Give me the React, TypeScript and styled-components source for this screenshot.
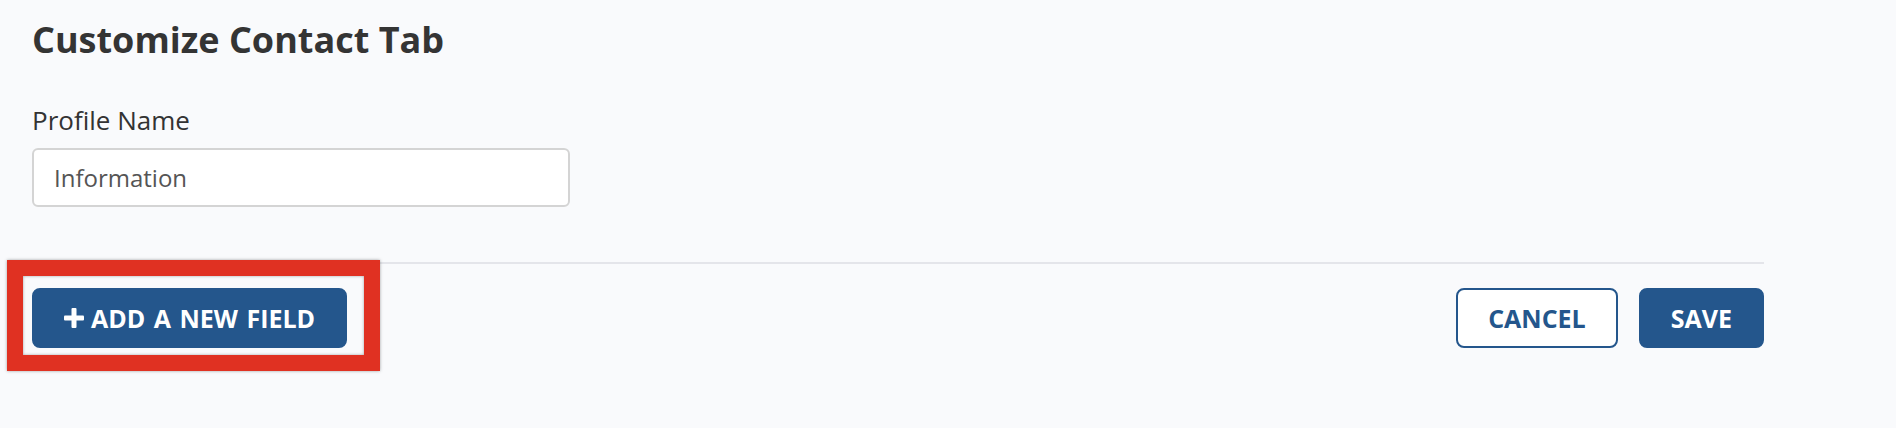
import React from "react";
import styled, { createGlobalStyle } from "styled-components";

const GlobalStyle = createGlobalStyle`
  html, body {
    margin: 0;
    padding: 0;
    background: #f9fafc;
  }
  body {
    font-family: "Open Sans", "Noto Sans", Arial, sans-serif;
    color: #333;
  }
`;

const PlusIcon = () => (
  <svg width="20" height="20" viewBox="0 0 20 20" aria-hidden="true">
    <rect x="7.5" y="0" width="5" height="20" rx="1" fill="currentColor" />
    <rect x="0" y="7.5" width="20" height="5" rx="1" fill="currentColor" />
  </svg>
);

const App = () => {
  return (
    <Page>
      <GlobalStyle />
      <Title>Customize Contact Tab</Title>
      <Field>
        <Label htmlFor="profile-name">Profile Name</Label>
        <Input id="profile-name" defaultValue="Information" />
      </Field>
      <Divider />
      <Footer>
        <Highlighted>
          <Button $variant="solid">
            <PlusIcon />
            ADD A NEW FIELD
          </Button>
          <Marker />
        </Highlighted>
        <Actions>
          <Button $variant="outline">CANCEL</Button>
          <Button $variant="solid">SAVE</Button>
        </Actions>
      </Footer>
    </Page>
  );
};

export default App;

const Page = styled.div`
  width: 1732px;
  padding: 16px 0 0 32px;
  height: 412px;
`;

const Title = styled.h1`
  margin: 0;
  font-size: 36px;
  line-height: 48px;
  font-weight: 700;
  color: #343434;
`;

const Field = styled.div`
  display: flex;
  flex-direction: column;
  margin-top: 38px;
`;

const Label = styled.label`
  font-size: 26px;
  line-height: 36px;
  color: #333;
`;

const Input = styled.input`
  box-sizing: border-box;
  margin-top: 10px;
  width: 538px;
  height: 59px;
  padding: 0 20px;
  border: 2px solid #d4d4d4;
  border-radius: 6px;
  background: #fff;
  font-family: inherit;
  font-size: 24px;
  color: #555;
  outline: none;
`;

const Divider = styled.hr`
  margin: 55px 0 0;
  border: 0;
  height: 2px;
  background: #e4e5ea;
`;

const Footer = styled.div`
  display: flex;
  justify-content: space-between;
  align-items: center;
  margin-top: 24px;
`;

const Actions = styled.div`
  display: flex;
  gap: 21px;
`;

const Highlighted = styled.div`
  position: relative;
`;

const Marker = styled.div`
  position: absolute;
  top: -28px;
  left: -25px;
  right: -33px;
  bottom: -23px;
  border: 16px solid #e03122;
  box-shadow: 0 0 3px rgba(0, 0, 0, 0.35), inset 0 0 3px rgba(0, 0, 0, 0.35);
  pointer-events: none;
`;

const Button = styled.button<{ $variant: "solid" | "outline" }>`
  box-sizing: border-box;
  display: inline-flex;
  align-items: center;
  gap: 7px;
  height: 60px;
  padding: 0 30px;
  border-radius: 8px;
  border: 2px solid #24568c;
  background: ${(p) => (p.$variant === "solid" ? "#24568c" : "#fff")};
  color: ${(p) => (p.$variant === "solid" ? "#fff" : "#24568c")};
  font-family: inherit;
  font-size: 25px;
  font-weight: 700;
  word-spacing: 2px;
  cursor: pointer;
`;
